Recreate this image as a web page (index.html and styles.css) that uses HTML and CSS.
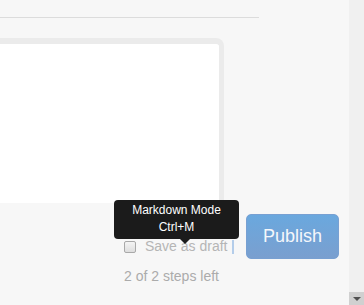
FILE: index.html
```html
<!DOCTYPE html>
<html>
<head>
<meta charset="utf-8">
<link rel="stylesheet" href="styles.css">
</head>
<body>
<div class="page">
  <main class="main">
    <div class="rule"></div>
    <div class="editor"></div>
    <div class="footer">
      <div class="draft-col">
        <div class="tooltip">Markdown Mode<br>Ctrl+M</div>
        <label class="draft-row">
          <span class="checkbox"></span>
          <span class="draft-label">Save as draft</span>
          <span class="caret"></span>
        </label>
        <div class="steps">2 of 2 steps left</div>
      </div>
      <button class="publish">Publish</button>
    </div>
  </main>
  <div class="scrollbar">
    <div class="scroll-track"></div>
    <div class="scroll-down"><span class="arrow-down"></span></div>
  </div>
</div>
</body>
</html>
```

FILE: styles.css
```css
html, body {
  margin: 0;
  padding: 0;
  height: 100%;
  overflow: hidden;
}
body {
  background: #f7f7f7;
  font-family: "Liberation Sans", Arial, sans-serif;
}
.page {
  display: flex;
  height: 305px;
}
.main {
  width: 349px;
  flex: none;
}
.rule {
  margin-top: 17px;
  width: 259px;
  height: 1px;
  background: #dcdcdc;
}
.editor {
  margin-top: 20px;
  width: 219px;
  height: 159px;
  background: #fff;
  border-top: 6px solid #ebebeb;
  border-right: 5px solid #ebebeb;
  border-top-right-radius: 8px;
}
.footer {
  position: relative;
  display: flex;
  align-items: flex-start;
  padding-left: 124px;
}
.draft-col {
  position: relative;
  width: 122px;
  padding-top: 35px;
}
.tooltip {
  position: absolute;
  left: -10px;
  top: -3px;
  width: 125px;
  padding: 2px 0 3px;
  box-sizing: border-box;
  background: #1b1b1b;
  color: #fff;
  font-size: 12px;
  line-height: 17px;
  text-align: center;
  border-radius: 4px;
  z-index: 2;
}
.tooltip::after {
  content: "";
  position: absolute;
  left: 66px;
  top: 100%;
  border-top: 5px solid #1b1b1b;
  border-left: 5px solid transparent;
  border-right: 5px solid transparent;
}
.draft-row {
  display: flex;
  align-items: center;
  height: 17px;
  font-size: 14px;
  line-height: 17px;
  color: #b5b5b5;
}
.checkbox {
  width: 10px;
  height: 10px;
  border: 1px solid #a9a9a9;
  border-radius: 2px;
  background: linear-gradient(#f4f4f4, #dedede);
  margin-right: 9px;
}
.caret {
  width: 2px;
  height: 14px;
  margin-left: 4px;
  background: #b4cdea;
}
.steps {
  margin-top: 11px;
  font-size: 14px;
  line-height: 20px;
  color: #ababab;
}
.publish {
  margin-top: 11px;
  width: 93px;
  height: 45px;
  padding: 0;
  border: 1px solid #78a0d2;
  border-radius: 5px;
  background: linear-gradient(#6aa8de, #7a9fcf);
  color: #f4f7fb;
  font-family: "Liberation Sans", Arial, sans-serif;
  font-size: 18px;
}
.scrollbar {
  width: 15px;
  flex: none;
  display: flex;
  flex-direction: column;
  background: #f0f0f0;
}
.scroll-track {
  flex: 1;
}
.scroll-down {
  height: 13px;
  background: #d0d0d0;
  display: flex;
  justify-content: center;
  padding-top: 5px;
  box-sizing: border-box;
}
.arrow-down {
  width: 0;
  height: 0;
  border-top: 4px solid #505050;
  border-left: 4px solid transparent;
  border-right: 4px solid transparent;
}
```
